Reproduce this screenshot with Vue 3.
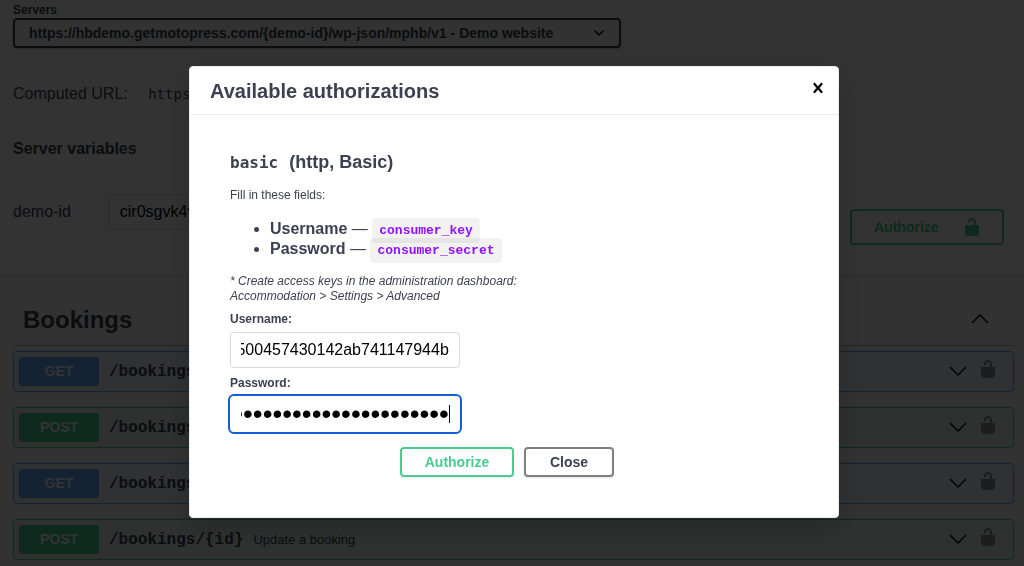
<script setup>
import { ref, onMounted } from 'vue'

const server = 'https://hbdemo.getmotopress.com/{demo-id}/wp-json/mphb/v1 - Demo website'
const demoId = ref('cir0sgvk4v')
const username = ref('ck_5ddc52f3457500457430142ab741147944b')
const password = ref('cs_5d9bcfd8a7ac6c1d5a2ad1c4b9d1b70d3f9a21')
const usernameInput = ref(null)
const passwordInput = ref(null)

const unlockPath =
  'M15.8 8H14V5.6C14 2.703 12.665 1 10 1 7.334 1 6 2.703 6 5.6V6h2v-.801C8 3.754 8.797 3 10 3c1.203 0 2 .754 2 2.199V8H4c-.553 0-1 .646-1 1.199V17c0 .549.428 1.139.951 1.307l1.197.387C5.672 18.861 6.55 19 7.1 19h5.8c.549 0 1.428-.139 1.951-.307l1.196-.387c.524-.167.953-.757.953-1.306V9.199C17 8.646 16.352 8 15.8 8z'

const operations = [
  { method: 'GET', path: '/bookings', summary: '' },
  { method: 'POST', path: '/bookings', summary: '' },
  { method: 'GET', path: '/bookings', summary: '' },
  { method: 'POST', path: '/bookings/{id}', summary: 'Update a booking' },
]

onMounted(() => {
  const user = usernameInput.value
  user.scrollLeft = user.scrollWidth
  const pass = passwordInput.value
  pass.focus()
  pass.setSelectionRange(pass.value.length, pass.value.length)
  pass.scrollLeft = pass.scrollWidth
})
</script>

<template>
  <div class="app">
    <main class="page">
      <section class="scheme">
        <div class="servers">
          <label class="servers-label" for="server">Servers</label>
          <div class="select-wrap">
            <select id="server">
              <option>{{ server }}</option>
            </select>
            <svg class="select-arrow" viewBox="0 0 12 8" aria-hidden="true">
              <path d="M2 2l4 4 4-4" />
            </svg>
          </div>
          <div class="computed">
            Computed URL:
            <code>https:</code>
          </div>
          <h4 class="vars-title">Server variables</h4>
          <div class="var-row">
            <label for="demo-id">demo-id</label>
            <input id="demo-id" v-model="demoId" type="text" />
          </div>
        </div>
        <button class="btn btn-green btn-open" type="button">
          <span>Authorize</span>
          <svg viewBox="0 0 20 20" aria-hidden="true"><path :d="unlockPath" /></svg>
        </button>
      </section>

      <section class="operations">
        <h3 class="tag">
          <span>Bookings</span>
          <button class="icon-btn" type="button" aria-label="Collapse Bookings">
            <svg class="chevron" viewBox="0 0 20 20"><path d="M2 13l8-8 8 8" /></svg>
          </button>
        </h3>
        <div
          v-for="(op, i) in operations"
          :key="i"
          class="op"
          :class="op.method.toLowerCase()"
        >
          <span class="method">{{ op.method }}</span>
          <span class="path">{{ op.path }}</span>
          <span class="summary">{{ op.summary }}</span>
          <button class="icon-btn" type="button" aria-label="Expand operation">
            <svg class="chevron" viewBox="0 0 20 20"><path d="M2 5l8 8 8-8" /></svg>
          </button>
          <button class="icon-btn lock" type="button" aria-label="Authorization">
            <svg viewBox="0 0 20 20"><path :d="unlockPath" /></svg>
          </button>
        </div>
      </section>
    </main>

    <div class="backdrop">
      <div class="modal" role="dialog" aria-labelledby="dialog-title">
        <header class="modal-header">
          <h3 id="dialog-title">Available authorizations</h3>
          <button class="icon-btn close" type="button" aria-label="Close dialog">
            <svg viewBox="0 0 20 20">
              <path
                d="M14.348 14.849c-.469.469-1.229.469-1.697 0L10 11.819l-2.651 3.029c-.469.469-1.229.469-1.697 0-.469-.469-.469-1.229 0-1.697l2.758-3.15-2.759-3.152c-.469-.469-.469-1.228 0-1.697.469-.469 1.228-.469 1.697 0L10 8.183l2.651-3.031c.469-.469 1.228-.469 1.697 0 .469.469.469 1.229 0 1.697l-2.758 3.152 2.758 3.15c.469.469.469 1.229 0 1.698z"
              />
            </svg>
          </button>
        </header>
        <form class="modal-body" @submit.prevent>
          <h4><code>basic</code><span>(http, Basic)</span></h4>
          <p class="hint">Fill in these fields:</p>
          <ul>
            <li><strong>Username</strong> — <code>consumer_key</code></li>
            <li><strong>Password</strong> — <code>consumer_secret</code></li>
          </ul>
          <p class="note">
            * Create access keys in the administration dashboard:<br />
            Accommodation &gt; Settings &gt; Advanced
          </p>
          <label for="username">Username:</label>
          <input id="username" ref="usernameInput" v-model="username" type="text" />
          <label for="password">Password:</label>
          <div class="password-field">
            <input id="password" ref="passwordInput" v-model="password" type="password" />
            <span class="caret" aria-hidden="true"></span>
          </div>
          <div class="actions">
            <button class="btn btn-green" type="submit">Authorize</button>
            <button class="btn" type="button">Close</button>
          </div>
        </form>
      </div>
    </div>
  </div>
</template>

<style>
body {
  background: #fafafa;
  overflow: hidden;
}
</style>

<style scoped>
* {
  box-sizing: border-box;
}

.app {
  font-family: "Liberation Sans", Arial, sans-serif;
  font-size: 16px;
  line-height: 20px;
  color: #3b4151;
}

h3,
h4,
p,
ul {
  margin: 0;
}

button,
input,
select {
  font-family: inherit;
}

svg {
  display: block;
  width: 20px;
  height: 20px;
}

.scheme {
  display: flex;
  justify-content: space-between;
  align-items: flex-end;
  padding: 3px 20px 30px 13px;
  background: #fff;
  box-shadow: 0 1px 2px rgba(0, 0, 0, 0.15);
}

.servers {
  padding-bottom: 15px;
}

.servers-label {
  display: block;
  font-size: 12px;
  font-weight: 700;
  line-height: 15px;
}

.select-wrap {
  display: grid;
  align-items: center;
  width: 608px;
}

select {
  grid-area: 1 / 1;
  appearance: none;
  height: 30px;
  padding: 0 40px 0 14px;
  border: 2px solid #41444e;
  border-radius: 4px;
  background: #f7f7f7;
  box-shadow: 0 1px 2px rgba(0, 0, 0, 0.25);
  color: #3b4151;
  font-size: 14px;
  font-weight: 700;
}

.select-arrow {
  grid-area: 1 / 1;
  justify-self: end;
  width: 12px;
  height: 8px;
  margin-right: 16px;
  fill: none;
  stroke: #000;
  stroke-width: 1.5;
  stroke-linecap: round;
  pointer-events: none;
}

.computed {
  margin-top: 36px;
}

.computed code {
  margin-left: 16px;
  font: 400 14px "DejaVu Sans Mono", monospace;
}

.vars-title {
  margin-top: 35px;
  font-size: 16px;
}

.var-row {
  display: flex;
  align-items: center;
  gap: 38px;
  margin-top: 35px;
}

input {
  height: 36px;
  padding: 0 10px;
  border: 1px solid #d9d9d9;
  border-radius: 4px;
  background: #fff;
  color: #000;
  font-size: 16px;
}

.btn {
  min-width: 90px;
  height: 30px;
  padding: 0 22px;
  border: 2px solid gray;
  border-radius: 4px;
  background: transparent;
  box-shadow: 0 1px 2px rgba(0, 0, 0, 0.1);
  color: #3b4151;
  font-size: 14px;
  font-weight: 700;
}

.btn-green {
  min-width: 114px;
  border-color: #49cc90;
  color: #49cc90;
}

.btn-open {
  display: flex;
  justify-content: space-between;
  align-items: center;
  width: 154px;
  height: 36px;
  padding-right: 20px;
}

.btn-open svg {
  fill: #49cc90;
}

.operations {
  display: grid;
  gap: 15px;
  padding: 20px 10px 0 13px;
}

.tag {
  display: flex;
  justify-content: space-between;
  align-items: center;
  height: 51px;
  margin-bottom: -10px;
  padding: 0 24px 0 10px;
  border-bottom: 1px solid rgba(59, 65, 81, 0.3);
  font-size: 24px;
}

.icon-btn {
  padding: 0;
  border: 0;
  background: none;
}

.icon-btn.lock,
.icon-btn.close {
  padding-bottom: 5px;
}

.chevron {
  fill: none;
  stroke: #000;
  stroke-width: 1.4;
}

.op {
  display: flex;
  align-items: center;
  gap: 10px;
  height: 41px;
  padding: 0 15px 0 5px;
  border: 1px solid;
  border-radius: 4px;
  box-shadow: 0 0 3px rgba(0, 0, 0, 0.19);
}

.op.get {
  border-color: #61affe;
  background: rgba(97, 175, 254, 0.1);
}

.op.post {
  border-color: #49cc90;
  background: rgba(73, 204, 144, 0.1);
}

.method {
  width: 80px;
  border-radius: 3px;
  color: #fff;
  font-size: 14px;
  font-weight: 700;
  line-height: 29px;
  text-align: center;
  text-shadow: 0 1px 0 rgba(0, 0, 0, 0.1);
}

.get .method {
  background: #61affe;
}

.post .method {
  background: #49cc90;
}

.path {
  font: 700 16px "Liberation Mono", "Courier New", monospace;
}

.summary {
  flex: 1;
  font-size: 13px;
}

.lock {
  opacity: 0.4;
}

.backdrop {
  position: fixed;
  inset: 0;
  padding: 66px 8px 0 12px;
  background: rgba(0, 0, 0, 0.8);
}

.modal {
  max-width: 650px;
  margin: 0 auto;
  border: 1px solid #ebebeb;
  border-radius: 4px;
  background: #fff;
  box-shadow: 0 10px 30px rgba(0, 0, 0, 0.2);
}

.modal-header {
  display: flex;
  justify-content: space-between;
  align-items: center;
  height: 48px;
  padding: 0 10px 0 20px;
  border-bottom: 1px solid #ebebeb;
}

.modal-header h3 {
  font-size: 20px;
}

.modal-body {
  padding: 36px 40px 40px;
}

.modal-body h4 {
  display: flex;
  align-items: baseline;
  gap: 11px;
  font-size: 18px;
  line-height: 22px;
}

.modal-body h4 code {
  font: 700 16px "DejaVu Sans Mono", monospace;
}

.hint {
  margin-top: 12px;
  font-size: 12px;
}

ul {
  margin-top: 14px;
  padding-left: 40px;
}

li code {
  padding: 5px 7px;
  border-radius: 4px;
  background: rgba(0, 0, 0, 0.05);
  color: #9012fe;
  font: 700 13px "Liberation Mono", "Courier New", monospace;
}

.note {
  margin-top: 15px;
  font-size: 12px;
  font-style: italic;
  line-height: 15px;
}

.modal-body > label {
  display: block;
  margin-top: 8px;
  font-size: 12px;
  font-weight: 700;
  line-height: 15px;
}

.modal-body input {
  display: block;
  width: 230px;
  margin-top: 5px;
}

.password-field {
  position: relative;
  width: 230px;
}

#password {
  border-color: #fff;
  outline: 2px solid #105fd6;
  outline-offset: 0;
  font-size: 28px;
  caret-color: transparent;
}

.caret {
  position: absolute;
  top: 9px;
  right: 10px;
  width: 1px;
  height: 18px;
  background: #000;
}

.actions {
  display: flex;
  justify-content: center;
  gap: 10px;
  margin-top: 15px;
  padding-right: 14px;
}
</style>
